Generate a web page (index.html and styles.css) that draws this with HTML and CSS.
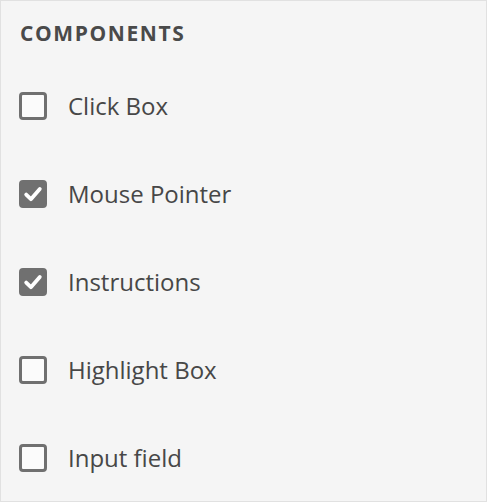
FILE: index.html
```html
<!DOCTYPE html>
<html>
<head>
<meta charset="utf-8">
<link rel="stylesheet" href="styles.css">
</head>
<body>
<div class="panel">
  <h2 class="title">COMPONENTS</h2>
  <ul class="list">
    <li class="row"><span class="box"></span><span class="label">Click Box</span></li>
    <li class="row"><span class="box checked"><svg viewBox="0 0 28 28" width="28" height="28"><path d="M7.2 14.6 L11.9 19.2 L20.8 9" fill="none" stroke="#fff" stroke-width="3.8" stroke-linecap="round" stroke-linejoin="round"/></svg></span><span class="label">Mouse Pointer</span></li>
    <li class="row"><span class="box checked"><svg viewBox="0 0 28 28" width="28" height="28"><path d="M7.2 14.6 L11.9 19.2 L20.8 9" fill="none" stroke="#fff" stroke-width="3.8" stroke-linecap="round" stroke-linejoin="round"/></svg></span><span class="label">Instructions</span></li>
    <li class="row"><span class="box"></span><span class="label">Highlight Box</span></li>
    <li class="row"><span class="box"></span><span class="label">Input field</span></li>
  </ul>
</div>
</body>
</html>
```

FILE: styles.css
```css
html, body {
  margin: 0;
  padding: 0;
}
body {
  width: 487px;
  height: 502px;
  background: #f5f5f5;
  font-family: "Open Sans", "Noto Sans", sans-serif;
  color: #4b4b4b;
}
.panel {
  box-sizing: border-box;
  width: 487px;
  height: 502px;
  border: 1px solid #e1e1e1;
  background: #f5f5f5;
  padding: 17px 0 0 18px;
}
.title {
  margin: 0 0 0 1px;
  font-size: 21px;
  font-weight: 700;
  letter-spacing: 1.6px;
  line-height: 30px;
  color: #4a4a4a;
}
.list {
  list-style: none;
  margin: 44px 0 0 0;
  padding: 0;
  display: flex;
  flex-direction: column;
  gap: 60px;
}
.row {
  display: flex;
  align-items: center;
  height: 28px;
  gap: 21px;
}
.box {
  box-sizing: border-box;
  width: 28px;
  height: 28px;
  border: 3px solid #707070;
  border-radius: 4px;
  background: #fbfbfb;
  flex: none;
  position: relative;
}
.box.checked {
  background: #707070;
}
.box svg {
  position: absolute;
  left: -3px;
  top: -3px;
}
.label {
  font-size: 24px;
  line-height: 28px;
  color: #474747;
}
```
